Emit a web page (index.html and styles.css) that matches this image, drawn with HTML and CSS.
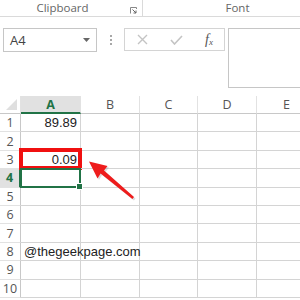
FILE: index.html
```html
<!DOCTYPE html>
<html lang="en">
  <head>
    <meta charset="UTF-8" />
    <title>Sheet</title>
    <link rel="stylesheet" href="styles.css">
  </head>
  <body>
    <div class="window">
      <div class="ribbon">
        <div class="group clipboard">
          <span class="group-label">Clipboard</span>
          <svg class="launcher" width="7" height="7" viewBox="0 0 7 7">
            <path d="M0.5 6.5V0.5H6.5V2" fill="none" stroke="#888" stroke-width="1" />
            <path d="M2.5 2.5L6 6M6 3.5V6H3.5" fill="none" stroke="#666" stroke-width="1" />
          </svg>
        </div>
        <div class="group font">
          <span class="group-label">Font</span>
        </div>
      </div>

      <div class="formula-row">
        <div class="namebox">
          <span>A4</span>
          <svg width="7" height="4" viewBox="0 0 7 4"><path d="M0 0H7L3.5 4Z" fill="#666" /></svg>
        </div>
        <div class="grip"><i></i><i></i><i></i></div>
        <div class="fx-buttons">
          <svg width="11" height="11" viewBox="0 0 11 11"><path d="M1 1L10 10M10 1L1 10" stroke="#c4c4c4" stroke-width="1.4" /></svg>
          <svg width="13" height="10" viewBox="0 0 13 10"><path d="M1 5L4.5 9L12 1" fill="none" stroke="#c4c4c4" stroke-width="1.6" /></svg>
          <span class="fx">f<sub>x</sub></span>
        </div>
        <div class="formula-input"></div>
      </div>

      <div class="sheet">
        <div class="corner"></div>
        <div class="col-head active">A</div>
        <div class="col-head">B</div>
        <div class="col-head">C</div>
        <div class="col-head">D</div>
        <div class="col-head">E</div>

        <div class="row-head">1</div>
        <div class="cell num">89.89</div><div class="cell"></div><div class="cell"></div><div class="cell"></div><div class="cell"></div>

        <div class="row-head">2</div>
        <div class="cell"></div><div class="cell"></div><div class="cell"></div><div class="cell"></div><div class="cell"></div>

        <div class="row-head">3</div>
        <div class="cell num marked">0.09</div><div class="cell"></div><div class="cell"></div><div class="cell"></div><div class="cell"></div>

        <div class="row-head active">4</div>
        <div class="cell selected"></div><div class="cell"></div><div class="cell"></div><div class="cell"></div><div class="cell"></div>

        <div class="row-head">5</div>
        <div class="cell"></div><div class="cell"></div><div class="cell"></div><div class="cell"></div><div class="cell"></div>

        <div class="row-head">6</div>
        <div class="cell"></div><div class="cell"></div><div class="cell"></div><div class="cell"></div><div class="cell"></div>

        <div class="row-head">7</div>
        <div class="cell"></div><div class="cell"></div><div class="cell"></div><div class="cell"></div><div class="cell"></div>

        <div class="row-head">8</div>
        <div class="cell overflow">@thegeekpage.com</div><div class="cell"></div><div class="cell"></div><div class="cell"></div><div class="cell"></div>

        <div class="row-head">9</div>
        <div class="cell"></div><div class="cell"></div><div class="cell"></div><div class="cell"></div><div class="cell"></div>

        <div class="row-head">10</div>
        <div class="cell"></div><div class="cell"></div><div class="cell"></div><div class="cell"></div><div class="cell"></div>

        <svg class="arrow" width="300" height="300" viewBox="0 0 300 300">
          <polygon points="89,162.5 107.5,167 104,171.6 134,198 132.4,200 100.6,174.6 97.5,179.5" fill="#9a9a9a" opacity="0.35" transform="translate(1.5,1.5)" />
          <polygon points="89,162.5 107.5,167 104,171.6 134,198 132.4,200 100.6,174.6 97.5,179.5" fill="#ee1c1c" />
        </svg>
      </div>
    </div>
  </body>
</html>
```

FILE: styles.css
```css
:root {
  --grid-line: #d4d4d4;
  --head-line: #e2e2e2;
  --excel-green: #217346;
  --label: #666;
}
body {
  margin: 0;
  background: #fff;
  font-family: "Open Sans", "Noto Sans", sans-serif;
}
.window {
  width: 300px;
  height: 300px;
  overflow: hidden;
  position: relative;
}

/* ribbon group labels */
.ribbon {
  display: flex;
  height: 17px;
  border-bottom: 1px solid #dadada;
  box-sizing: border-box;
}
.group {
  position: relative;
  display: flex;
  justify-content: center;
  align-items: center;
}
.group-label {
  font-size: 11.5px;
  color: var(--label);
  line-height: 1;
  padding-bottom: 1px;
}
.clipboard {
  width: 143px;
  border-right: 1px solid #dadada;
  box-sizing: border-box;
}
.clipboard .group-label {
  margin-left: -17px;
}
.launcher {
  position: absolute;
  right: 5px;
  top: 7px;
}
.font {
  flex: 1;
  padding-left: 32px;
}

/* name box + formula bar */
.formula-row {
  display: flex;
  align-items: flex-start;
  padding: 11px 0 0 3px;
  height: 80px;
  box-sizing: border-box;
}
.namebox {
  width: 94px;
  height: 24px;
  border: 1px solid #c6c6c6;
  box-sizing: border-box;
  display: flex;
  align-items: center;
  justify-content: space-between;
  padding: 0 6px 0 6px;
  font-size: 13px;
  color: #444;
}
.grip {
  width: 27px;
  display: flex;
  flex-direction: column;
  align-items: center;
  gap: 2px;
  padding-top: 7px;
}
.grip i {
  width: 2px;
  height: 2px;
  background: #a8a8a8;
}
.fx-buttons {
  width: 101px;
  height: 23px;
  border: 1px solid #d4d4d4;
  box-sizing: border-box;
  display: flex;
  align-items: center;
  justify-content: space-between;
  padding: 0 11px 0 12px;
}
.fx {
  font-family: "Liberation Serif", serif;
  font-style: italic;
  font-size: 14px;
  color: #555;
  line-height: 1;
}
.fx sub {
  font-size: 9px;
  vertical-align: -1px;
}
.formula-input {
  margin-left: 3px;
  flex: 1;
  height: 60px;
  border: 1px solid #c6c6c6;
  border-right: none;
  box-sizing: border-box;
}

/* grid */
.sheet {
  position: relative;
  display: grid;
  grid-template-columns: 21px 60px 59px 58px 59px 60px;
  grid-template-rows: 18px repeat(10, 18.4px);
  margin-top: -1px;
  font-family: "Liberation Sans", Arial, sans-serif;
}
.corner {
  border-right: 1px solid var(--head-line);
  border-bottom: 1px solid #c8c8c8;
  position: relative;
  box-sizing: border-box;
}
.corner::after {
  content: "";
  position: absolute;
  right: 3px;
  bottom: 3px;
  border-left: 11px solid transparent;
  border-bottom: 11px solid #dfdfdf;
}
.col-head {
  display: flex;
  align-items: center;
  justify-content: center;
  border-right: 1px solid var(--head-line);
  border-bottom: 1px solid #c8c8c8;
  box-sizing: border-box;
  font-family: "Open Sans", sans-serif;
  font-size: 12.5px;
  color: #555;
}
.col-head.active {
  background: #e1e1e1;
  color: var(--excel-green);
  font-weight: 700;
  border-bottom: 2px solid var(--excel-green);
}
.row-head {
  display: flex;
  align-items: center;
  justify-content: center;
  border-right: 1px solid #c8c8c8;
  border-bottom: 1px solid var(--head-line);
  box-sizing: border-box;
  font-family: "Open Sans", sans-serif;
  font-size: 12.5px;
  color: #555;
}
.row-head.active {
  background: #e1e1e1;
  color: var(--excel-green);
  font-weight: 700;
  border-right: 2px solid var(--excel-green);
}
.cell {
  position: relative;
  border-right: 1px solid var(--grid-line);
  border-bottom: 1px solid var(--grid-line);
  box-sizing: border-box;
  font-size: 13px;
  color: #222;
  display: flex;
  align-items: center;
  padding: 0 3px;
}
.cell.num {
  justify-content: flex-end;
}
.cell.overflow {
  white-space: nowrap;
  overflow: visible;
  z-index: 1;
  padding-left: 3px;
}
.cell.selected::after {
  content: "";
  position: absolute;
  top: -1px;
  left: -1px;
  right: -1px;
  bottom: -1px;
  border: 2px solid var(--excel-green);
}
.cell.selected::before {
  content: "";
  position: absolute;
  right: -3px;
  bottom: -3px;
  width: 5px;
  height: 5px;
  background: var(--excel-green);
  border: 1px solid #fff;
  z-index: 2;
}
.cell.marked::after {
  content: "";
  position: absolute;
  top: -3px;
  left: -2px;
  right: -2px;
  bottom: -2px;
  border: 4px solid #f01010;
}
.arrow {
  position: absolute;
  top: -97px;
  left: 0;
  pointer-events: none;
}
```
